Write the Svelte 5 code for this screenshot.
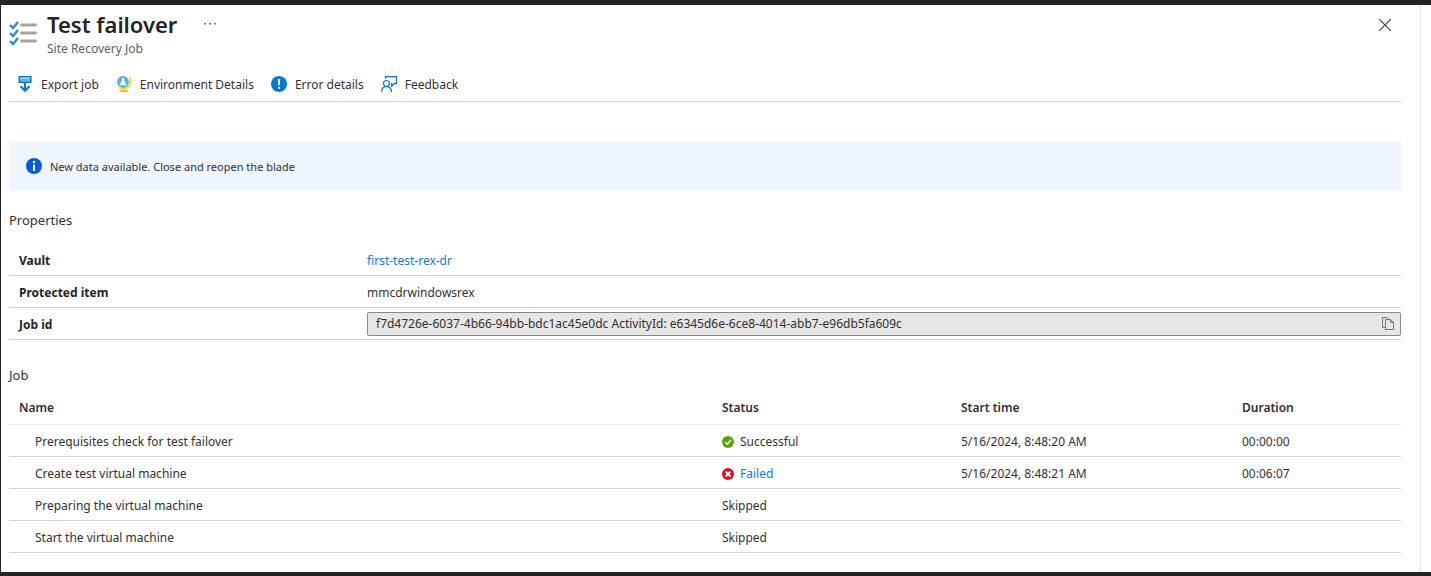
<script lang="ts">
	interface JobStep {
		name: string;
		status: 'Successful' | 'Failed' | 'Skipped';
		startTime: string;
		duration: string;
	}

	let jobId = $state(
		'f7d4726e-6037-4b66-94bb-bdc1ac45e0dc ActivityId: e6345d6e-6ce8-4014-abb7-e96db5fa609c'
	);

	const steps: JobStep[] = [
		{
			name: 'Prerequisites check for test failover',
			status: 'Successful',
			startTime: '5/16/2024, 8:48:20 AM',
			duration: '00:00:00'
		},
		{
			name: 'Create test virtual machine',
			status: 'Failed',
			startTime: '5/16/2024, 8:48:21 AM',
			duration: '00:06:07'
		},
		{ name: 'Preparing the virtual machine', status: 'Skipped', startTime: '', duration: '' },
		{ name: 'Start the virtual machine', status: 'Skipped', startTime: '', duration: '' }
	];

	const copyJobId = () => {
		navigator.clipboard?.writeText(jobId);
	};
</script>

<div class="page">
	<main class="blade">
		<header class="header">
			<svg class="job-icon" width="28" height="24" viewBox="0 0 28 24" fill="none">
				<path d="M12.500 4h14M12.500 12h14M12.500 20h14" stroke="#a3a3a3" stroke-width="2.800" stroke-linecap="round" />
				<path
					d="M1 4l3 3 5-6M1 12l3 3 5-6M1 20l3 3 5-6"
					stroke="#2b88e6"
					stroke-width="2.400"
				/>
			</svg>
			<div class="titles">
				<div class="title-row">
					<h1>Test failover</h1>
					<button class="more" aria-label="More options">
						<svg width="12" height="2" viewBox="0 0 12 2" fill="#797775">
							<path d="M0 0h2v1.500H0zM5 0h2v1.500H5zM10 0h2v1.500h-2z" />
						</svg>
					</button>
				</div>
				<p class="subtitle">Site Recovery Job</p>
			</div>
			<button class="close" aria-label="Close">
				<svg width="12" height="12" viewBox="0 0 12 12" stroke="#444" stroke-width="1.200">
					<path d="M0 0l12 12M12 0L0 12" />
				</svg>
			</button>
		</header>

		<div class="toolbar">
			<button>
				<svg width="16" height="16" viewBox="0 0 16 16">
					<path d="M1.500 0h13v7h-13z" fill="#0078d4" />
					<path d="M3 1.300h10v2.200H3z" fill="#a5d3f3" />
					<path d="M3 3.500h10v2.200H3z" fill="#6fb6e8" />
					<path d="M8 6v9M3.500 10.300L8 14.800l4.500-4.500" fill="none" stroke="#0078d4" stroke-width="2" />
				</svg>
				<span>Export job</span>
			</button>
			<button>
				<svg width="16" height="16" viewBox="0 0 16 16">
					<path
						d="M13 .5c2.500 3.500 2 8-1 10.700-2.500 2-5.500 2.200-8.500 1M8 13v2"
						fill="none"
						stroke="#fcd116"
						stroke-width="1.500"
					/>
					<path d="M3.500 14.300h9V16h-9z" fill="#f2b90c" />
					<circle cx="7" cy="6" r="6" fill="#59b4d9" />
					<path d="M6 2h2v2.500l2.700 4.700H3.300L6 4.500z" fill="#fff" />
				</svg>
				<span>Environment Details</span>
			</button>
			<button>
				<svg width="16" height="16" viewBox="0 0 16 16">
					<circle cx="8" cy="8" r="8" fill="#0078d4" />
					<path d="M6.800 3h2.400l-.4 6.300H7.200zM7 10.700h2v2H7z" fill="#fff" />
				</svg>
				<span>Error details</span>
			</button>
			<button>
				<svg width="16" height="16" viewBox="0 0 16 16" fill="none" stroke="#0078d4" stroke-width="1.200">
					<circle cx="5.500" cy="7.500" r="3" />
					<path d="M.6 16c0-3.200 2-5.300 4.900-5.300s4.900 2.100 4.900 5.300" />
					<path d="M4.500 3V.6h11v7h-2.300L10.700 10V7.600H10" />
				</svg>
				<span>Feedback</span>
			</button>
		</div>

		<div class="banner" role="status">
			<svg width="16" height="16" viewBox="0 0 16 16">
				<circle cx="8" cy="8" r="8" fill="#015cda" />
				<circle cx="8" cy="4" r="1.300" fill="#fff" />
				<path d="M7 6.500h2V13H7z" fill="#fff" />
			</svg>
			<span>New data available. Close and reopen the blade</span>
		</div>

		<h2>Properties</h2>
		<table class="properties">
			<tbody>
				<tr>
					<th scope="row">Vault</th>
					<td><a href="#vault">first-test-rex-dr</a></td>
				</tr>
				<tr>
					<th scope="row">Protected item</th>
					<td>mmcdrwindowsrex</td>
				</tr>
				<tr>
					<th scope="row"><label for="job-id">Job id</label></th>
					<td class="field-cell">
						<div class="copy-field">
							<input id="job-id" type="text" readonly value={jobId} />
							<button aria-label="Copy job id" onclick={copyJobId}>
								<svg width="12" height="13" viewBox="0 0 12 13" fill="none" stroke="#777">
									<path d="M3.500 10.500h-3V.5h4.500l2 2" />
									<path d="M3.500 2.500h5l3 3v7h-8zM8.500 2.500v3h3" />
								</svg>
							</button>
						</div>
					</td>
				</tr>
			</tbody>
		</table>

		<h2 class="job-heading">Job</h2>
		<table class="steps">
			<thead>
				<tr>
					<th scope="col">Name</th>
					<th scope="col" class="status-col">Status</th>
					<th scope="col" class="start-col">Start time</th>
					<th scope="col" class="duration-col">Duration</th>
				</tr>
			</thead>
			<tbody>
				{#each steps as step (step.name)}
					<tr>
						<td class="step-name">{step.name}</td>
						<td>
							<div class="status">
								{#if step.status === 'Successful'}
									<svg width="12" height="12" viewBox="0 0 12 12">
										<circle cx="6" cy="6" r="6" fill="#57a300" />
										<path d="M3 6l2.200 2.200L9 4" fill="none" stroke="#fff" stroke-width="1.500" />
									</svg>
									<span>{step.status}</span>
								{:else if step.status === 'Failed'}
									<svg width="12" height="12" viewBox="0 0 12 12">
										<circle cx="6" cy="6" r="6" fill="#e00b1c" />
										<path d="M3.500 3.500l5 5M8.500 3.500l-5 5" stroke="#fff" stroke-width="1.800" />
									</svg>
									<a href="#failed">{step.status}</a>
								{:else}
									<span>{step.status}</span>
								{/if}
							</div>
						</td>
						<td>{step.startTime}</td>
						<td>{step.duration}</td>
					</tr>
				{/each}
			</tbody>
		</table>
	</main>
</div>

<style>
	:global(body) {
		background-color: #fff;
	}

	.page {
		padding-right: 10px;
		border-top: 5px solid #252427;
		border-bottom: 4px solid #252427;
		border-left: 1px solid #252427;
		font-family: 'Segoe UI', 'Noto Sans', sans-serif;
		font-size: 12px;
		line-height: 20px;
		color: #323130;
	}

	.blade {
		padding: 0 19px 19px 8px;
		border-right: 1px solid #e8e8e8;
	}

	.header {
		display: flex;
		align-items: flex-start;
		height: 62px;
	}

	.job-icon {
		margin-top: 16px;
	}

	.titles {
		flex: 1;
		padding: 2px 0 0 10px;
	}

	.title-row {
		display: flex;
		align-items: center;
		gap: 27px;
	}

	h1 {
		margin: 0;
		font-size: 22px;
		line-height: 34px;
		font-weight: 600;
		color: #252423;
	}

	.subtitle {
		margin: 0;
		font-size: 12px;
		line-height: 16px;
		color: #605e5c;
	}

	button {
		display: flex;
		align-items: center;
		padding: 0;
		border: none;
		background: none;
		font: inherit;
		color: inherit;
		cursor: pointer;
	}

	.close {
		padding: 14px 10px;
	}

	.toolbar {
		display: flex;
		gap: 17px;
		height: 34px;
		padding-left: 8px;
		border-bottom: 1px solid #d2d0ce;
	}

	.toolbar button {
		gap: 8px;
	}

	.toolbar span,
	.banner span {
		padding-top: 2px;
	}

	.banner {
		display: flex;
		align-items: center;
		gap: 8px;
		height: 50px;
		margin-top: 39px;
		padding: 0 17px;
		border-radius: 2px;
		background-color: #eff6ff;
		font-size: 11px;
	}

	h2 {
		margin: 19px 0 14px;
		font-size: 13px;
		line-height: 20px;
		font-weight: 400;
	}

	.job-heading {
		margin: 25px 0 5px;
	}

	table {
		width: 100%;
		border-collapse: separate;
		border-spacing: 0;
		table-layout: fixed;
	}

	th,
	td {
		height: 29px;
		padding: 2px 0 0 10px;
		border-bottom: 1px solid #d2d0ce;
		text-align: left;
		white-space: nowrap;
	}

	.properties th {
		width: 338px;
		color: #252423;
		font-weight: 700;
	}

	.properties .field-cell {
		height: 31px;
		padding-top: 0;
	}

	.steps th {
		height: 32px;
		border-color: #edebe9;
		font-weight: 600;
	}

	.steps .status-col {
		width: 229px;
	}

	.steps .start-col {
		width: 271px;
	}

	.steps .duration-col {
		width: 159px;
	}

	.steps .step-name {
		padding-left: 26px;
	}

	a {
		color: #1579d3;
		text-decoration: none;
	}

	a:hover {
		text-decoration: underline;
	}

	.status {
		display: flex;
		align-items: center;
		gap: 6px;
	}

	.copy-field {
		display: flex;
		align-items: center;
		height: 22px;
		padding: 0 6px 0 8px;
		border: 1px solid #8a8886;
		border-radius: 2px;
		background-color: #e6e6e6;
	}

	.copy-field input {
		flex: 1;
		padding: 0;
		border: none;
		background: none;
		font: inherit;
		color: inherit;
		outline: none;
	}
</style>
